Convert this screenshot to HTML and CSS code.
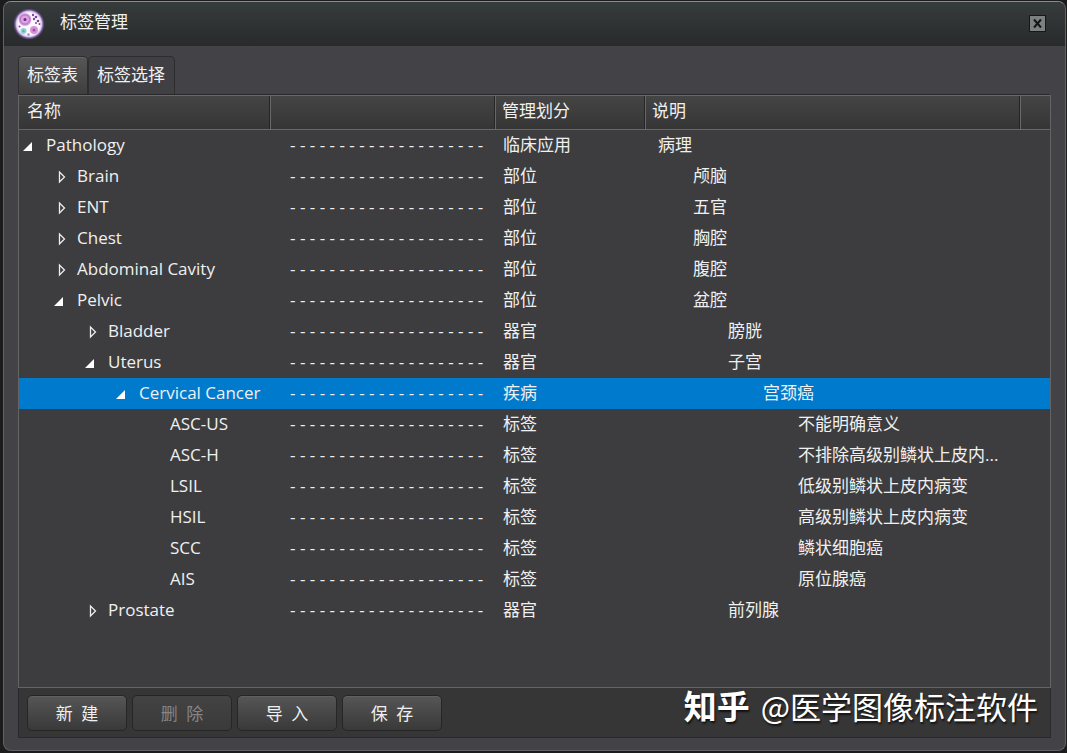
FILE: index.html
```html
<!DOCTYPE html>
<html lang="zh-CN">
<head>
  <meta charset="UTF-8">
  <meta name="viewport" content="width=device-width, initial-scale=1.0">
  <title>标签管理</title>
  <link rel="stylesheet" href="styles.css">
</head>
<body>
  <div class="window">
    <header class="titlebar">
      <svg class="logo" viewBox="0 0 32 32" aria-hidden="true">
        <defs>
          <radialGradient id="dish">
            <stop offset="0.7" stop-color="#fdf8ff"/>
            <stop offset="0.82" stop-color="#d8c4ea"/>
            <stop offset="0.91" stop-color="#6c5890"/>
            <stop offset="1" stop-color="#3a3454"/>
          </radialGradient>
        </defs>
        <circle cx="16" cy="16" r="15.5" fill="url(#dish)"/>
        <circle cx="12" cy="11.500" r="6.300" fill="#cf93d8"/>
        <circle cx="12" cy="11.500" r="4.500" fill="#dda6e2" stroke="#b76fc6"/>
        <circle cx="12" cy="11.500" r="1.500" fill="#702b86"/>
        <circle cx="21" cy="22" r="4" fill="#d692d9"/>
        <circle cx="21" cy="22" r="1.500" fill="#a34cae"/>
        <circle cx="10.500" cy="23" r="3" fill="#8fd3d6"/>
        <circle cx="10.500" cy="23" r="1.200" fill="#5fa9b5"/>
        <g fill="#7b4594">
          <circle cx="20" cy="7" r="1.200"/>
          <circle cx="23" cy="9" r="1.300"/>
          <circle cx="21" cy="11" r="1.200"/>
          <circle cx="25" cy="13" r="1.300"/>
          <circle cx="23" cy="15" r="1"/>
          <circle cx="26.500" cy="16" r="1"/>
          <circle cx="6.500" cy="18.500" r="1"/>
          <circle cx="15.500" cy="26.500" r="1.200" fill="#a884bd"/>
        </g>
      </svg>
      <h1>标签管理</h1>
      <button class="close" aria-label="关闭">
        <svg viewBox="0 0 15 15"><path d="M4 3.500l7 8M11 3.500l-7 8"/></svg>
      </button>
    </header>

    <main class="content">
      <div class="tabs" role="tablist">
        <button class="tab active" role="tab" aria-selected="true">标签表</button>
        <button class="tab" role="tab" aria-selected="false">标签选择</button>
      </div>

      <div class="panel">
        <table class="tree">
          <colgroup>
            <col class="col-name">
            <col class="col-line">
            <col class="col-type">
            <col class="col-desc">
            <col class="col-end">
          </colgroup>
          <thead>
            <tr><th>名称</th><th></th><th>管理划分</th><th>说明</th><th></th></tr>
          </thead>
          <tbody id="rows"></tbody>
        </table>
      </div>

      <footer class="actions">
        <button class="btn">新&ensp;建</button>
        <button class="btn" disabled>删&ensp;除</button>
        <button class="btn">导&ensp;入</button>
        <button class="btn">保&ensp;存</button>
        <p class="credit"><strong>知乎</strong> @医学图像标注软件</p>
      </footer>
    </main>
  </div>

  <script src="script.js"></script>
</body>
</html>
```
FILE: styles.css
```css
* { box-sizing: border-box; margin: 0; padding: 0; }
body {
  min-height: 100vh;
  display: flex;
  padding: 1px 1px 2px 3px;
  background: #1c1c1d;
  color: #f0f0f0;
  font-family: "Open Sans", "Noto Sans CJK SC", sans-serif;
  font-size: 17px;
}
button { font: inherit; color: inherit; }

.window {
  flex: 1;
  display: flex;
  flex-direction: column;
  border: 1px solid #626264;
  border-top-color: #8a8c8c;
  border-radius: 8px;
  background: #434246;
  overflow: hidden;
}
.titlebar {
  display: flex;
  align-items: center;
  height: 44px;
  padding: 0 19px 1px 9px;
  background: linear-gradient(#363b3b, #292b2b);
}
.logo { width: 32px; height: 32px; }
.titlebar h1 {
  margin-left: 15px;
  padding-bottom: 3px;
  font-size: 17px;
  line-height: 24px;
  font-weight: normal;
}
.close {
  width: 17px;
  height: 17px;
  margin-left: auto;
  border: 1px solid #161818;
  background: #7d8080;
  cursor: pointer;
}
.close svg { display: block; width: 15px; height: 15px; }
.close path { fill: none; stroke: #151717; stroke-width: 2; }

.content {
  flex: 1;
  display: flex;
  flex-direction: column;
  padding: 10px 14px 12px;
}
.tabs { display: flex; }
.tab {
  height: 38px;
  padding: 0 9px 2px 8px;
  border: 1px solid #2d2d2f;
  border-bottom: none;
  border-radius: 5px 5px 0 0;
  background: #403f43;
  line-height: 24px;
  cursor: pointer;
}
.tab.active {
  background: linear-gradient(#565656, #3f3f40);
  box-shadow: inset 0 1px #656565;
}

.panel {
  flex: 1;
  border: 1px solid #646466;
  border-top-color: #29292b;
  background: #3d3d3f;
}
.tree {
  width: 100%;
  border-collapse: collapse;
  table-layout: fixed;
}
.col-name { width: 251px; }
.col-line { width: 225px; }
.col-type { width: 150px; }
.col-end { width: 30px; }
.tree th {
  height: 35px;
  padding: 0 0 4px 7px;
  background: linear-gradient(#454545, #353535);
  box-shadow: inset 0 1px #68686a, inset 0 -1px #68686a, inset -1px 0 #252525, inset 1px 0 #68686a;
  font-weight: normal;
  text-align: left;
  line-height: 24px;
}
.tree th:first-child { padding-left: 8px; box-shadow: inset 0 1px #68686a, inset 0 -1px #68686a, inset -1px 0 #252525; }
.tree th:last-child { box-shadow: inset 0 1px #68686a, inset 0 -1px #68686a, inset 1px 0 #68686a; }
.tree td {
  height: 31px;
  padding-bottom: 2px;
  line-height: 24px;
  white-space: nowrap;
}
.tree .selected { background: #007acc; }

/* one indent step per tree level */
.name { display: flex; align-items: center; }
.level-1 .name { padding-left: 31px; }
.level-2 .name { padding-left: 62px; }
.level-3 .name { padding-left: 93px; }
.level-4 .name { padding-left: 124px; }
.toggle {
  width: 27px;
  height: 24px;
  border: none;
  background: none;
  cursor: pointer;
}
.toggle svg { display: block; width: 16px; height: 16px; }
.leaf { width: 27px; }

.tree .line { padding-left: 20px; }
.tree .type { padding-left: 8px; }
.tree .desc { padding-left: 13px; }
.tree .level-1 .desc { padding-left: 48px; }
.tree .level-2 .desc { padding-left: 83px; }
.tree .level-3 .desc { padding-left: 118px; }
.tree .level-4 .desc {
  padding-left: 153px;
  padding-right: 8px;
  overflow: hidden;
  text-overflow: ellipsis;
}

.actions {
  display: flex;
  gap: 5px;
  height: 50px;
  padding: 7px 12px 0 8px;
  border: 1px solid #2a2a2c;
  border-top: none;
  background: #363637;
}
.btn {
  width: 100px;
  height: 36px;
  padding-bottom: 2px;
  border: 1px solid #262626;
  border-radius: 5px;
  background: linear-gradient(#565656, #393939);
  box-shadow: inset 0 1px #606060;
  cursor: pointer;
}
.btn:disabled {
  background: linear-gradient(#434343, #3a3a3a);
  box-shadow: none;
  color: #858585;
  cursor: default;
}
.credit {
  margin-left: auto;
  color: #fff;
  font-family: "Noto Sans CJK SC", sans-serif;
  font-size: 31px;
  line-height: 20px;
  white-space: nowrap;
  text-shadow: 1px 2px 2px #111;
}
.credit strong { margin-right: 4px; font-size: 33px; }
```
FILE: script.js
```js
// [level, name, state, type, description]
const tags = [
  [0, 'Pathology', 'open', '临床应用', '病理'],
  [1, 'Brain', 'closed', '部位', '颅脑'],
  [1, 'ENT', 'closed', '部位', '五官'],
  [1, 'Chest', 'closed', '部位', '胸腔'],
  [1, 'Abdominal Cavity', 'closed', '部位', '腹腔'],
  [1, 'Pelvic', 'open', '部位', '盆腔'],
  [2, 'Bladder', 'closed', '器官', '膀胱'],
  [2, 'Uterus', 'open', '器官', '子宫'],
  [3, 'Cervical Cancer', 'open', '疾病', '宫颈癌'],
  [4, 'ASC-US', 'leaf', '标签', '不能明确意义'],
  [4, 'ASC-H', 'leaf', '标签', '不排除高级别鳞状上皮内...'],
  [4, 'LSIL', 'leaf', '标签', '低级别鳞状上皮内病变'],
  [4, 'HSIL', 'leaf', '标签', '高级别鳞状上皮内病变'],
  [4, 'SCC', 'leaf', '标签', '鳞状细胞癌'],
  [4, 'AIS', 'leaf', '标签', '原位腺癌'],
  [2, 'Prostate', 'closed', '器官', '前列腺']
];

const arrows = {
  open: '<svg viewBox="0 0 16 16"><path d="M13 5v9H4z" fill="#fff"/></svg>',
  closed: '<svg viewBox="0 0 16 16"><path d="M9.500 4v10l5-5z" fill="none" stroke="#eee" stroke-width="1.300"/></svg>'
};

const line = Array(20).fill('-').join(' ');

document.getElementById('rows').innerHTML = tags.map(([level, name, state, type, desc]) => {
  const toggle = state === 'leaf'
    ? '<span class="leaf"></span>'
    : `<button class="toggle" aria-label="${name}" aria-expanded="${state === 'open'}">${arrows[state]}</button>`;
  const selected = name === 'Cervical Cancer' ? ' selected' : '';
  return `<tr class="level-${level}${selected}">
    <td><div class="name">${toggle}<span>${name}</span></div></td>
    <td class="line">${line}</td>
    <td class="type">${type}</td>
    <td class="desc">${desc}</td>
    <td></td>
  </tr>`;
}).join('');
```
